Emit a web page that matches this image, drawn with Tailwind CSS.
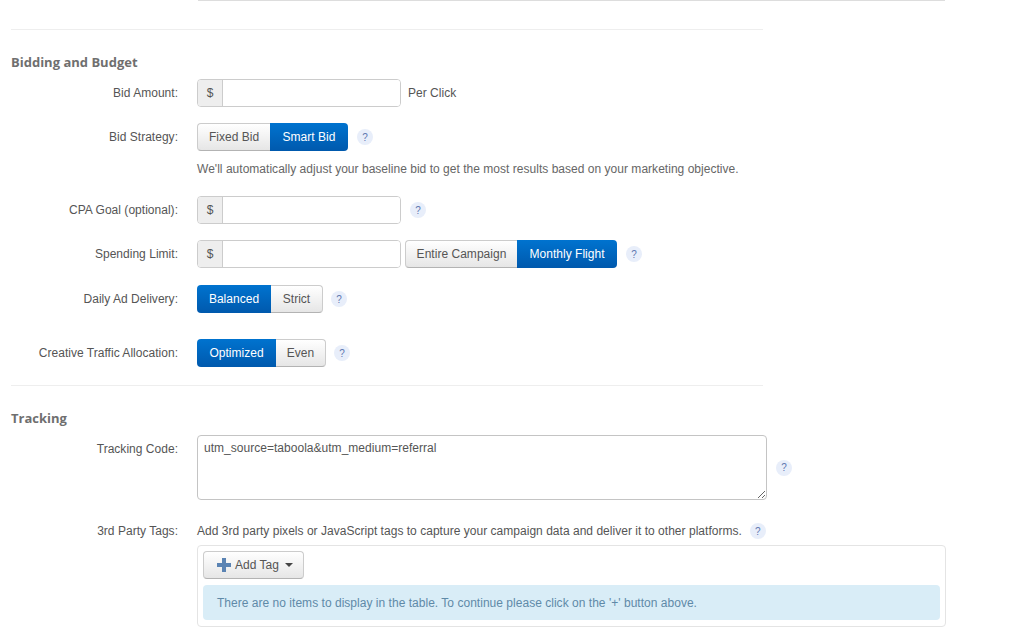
<!DOCTYPE html>
<html lang="en">
<head>
    <meta charset="UTF-8">
    <title>Bidding and Budget</title>
    <script src="https://cdn.jsdelivr.net/npm/@tailwindcss/browser@4"></script>
</head>
<body class="bg-white font-['Liberation_Sans',Arial,sans-serif] text-[12px] tracking-[0.025px] text-[#555]">
<div class="w-[1024px] h-[642px] overflow-hidden pl-[11px]">
    <!-- end of previous section -->
    <div class="ml-[187px] w-[747px] h-px bg-[#ddd]"></div>
    <div class="mt-[28px] w-[752px] h-px bg-[#eee]"></div>

    <!-- Bidding and Budget -->
    <h2 class="mt-[22px] h-[20px] leading-[20px] font-['Open_Sans',sans-serif] font-bold text-[13px] tracking-normal text-[#6f6f6f]">Bidding and Budget</h2>

    <div class="mt-[7px] flex items-center h-[28px]">
        <label class="w-[167px] text-right">Bid Amount:</label>
        <div class="ml-[19px] flex h-[28px] w-[204px] border border-[#ccc] rounded-[4px] overflow-hidden">
            <span class="w-[25px] bg-[#eee] border-r border-[#ccc] flex items-center justify-center">$</span>
            <input type="text" class="flex-1 min-w-0 bg-white">
        </div>
        <span class="ml-[7px]">Per Click</span>
    </div>

    <div class="mt-[16px] flex items-center h-[28px]">
        <label class="w-[167px] text-right">Bid Strategy:</label>
        <div class="ml-[19px] flex h-[28px]">
            <button class="w-[73px] border border-r-0 border-[#ccc] border-b-[#b3b3b3] rounded-l-[4px] bg-gradient-to-b from-white to-[#e6e6e6] text-[#555]">Fixed Bid</button>
            <button class="w-[78px] rounded-r-[4px] bg-gradient-to-b from-[#0073cf] to-[#0059ad] text-white">Smart Bid</button>
        </div>
        <span class="ml-[9px] w-[16px] h-[16px] rounded-full bg-[#e8eefa] text-[#5f78b0] text-[10px] flex items-center justify-center">?</span>
    </div>

    <p class="mt-[10px] ml-[186px] h-[16px] leading-[16px] text-[#666]">We'll automatically adjust your baseline bid to get the most results based on your marketing objective.</p>

    <div class="mt-[19px] flex items-center h-[28px]">
        <label class="w-[167px] text-right">CPA Goal (optional):</label>
        <div class="ml-[19px] flex h-[28px] w-[204px] border border-[#ccc] rounded-[4px] overflow-hidden">
            <span class="w-[25px] bg-[#eee] border-r border-[#ccc] flex items-center justify-center">$</span>
            <input type="text" class="flex-1 min-w-0 bg-white">
        </div>
        <span class="ml-[9px] w-[16px] h-[16px] rounded-full bg-[#e8eefa] text-[#5f78b0] text-[10px] flex items-center justify-center">?</span>
    </div>

    <div class="mt-[16px] flex items-center h-[28px]">
        <label class="w-[167px] text-right">Spending Limit:</label>
        <div class="ml-[19px] flex h-[28px] w-[204px] border border-[#ccc] rounded-[4px] overflow-hidden">
            <span class="w-[25px] bg-[#eee] border-r border-[#ccc] flex items-center justify-center">$</span>
            <input type="text" class="flex-1 min-w-0 bg-white">
        </div>
        <div class="ml-[4px] flex h-[28px]">
            <button class="w-[112px] border border-r-0 border-[#ccc] border-b-[#b3b3b3] rounded-l-[4px] bg-gradient-to-b from-white to-[#e6e6e6] text-[#555]">Entire Campaign</button>
            <button class="w-[100px] rounded-r-[4px] bg-gradient-to-b from-[#0073cf] to-[#0059ad] text-white">Monthly Flight</button>
        </div>
        <span class="ml-[9px] w-[16px] h-[16px] rounded-full bg-[#e8eefa] text-[#5f78b0] text-[10px] flex items-center justify-center">?</span>
    </div>

    <div class="mt-[17px] flex items-center h-[28px]">
        <label class="w-[167px] text-right">Daily Ad Delivery:</label>
        <div class="ml-[19px] flex h-[28px]">
            <button class="w-[74px] rounded-l-[4px] bg-gradient-to-b from-[#0073cf] to-[#0059ad] text-white">Balanced</button>
            <button class="w-[52px] border border-l-0 border-[#ccc] border-b-[#b3b3b3] rounded-r-[4px] bg-gradient-to-b from-white to-[#e6e6e6] text-[#555]">Strict</button>
        </div>
        <span class="ml-[8px] w-[16px] h-[16px] rounded-full bg-[#e8eefa] text-[#5f78b0] text-[10px] flex items-center justify-center">?</span>
    </div>

    <div class="mt-[26px] flex items-center h-[28px]">
        <label class="w-[167px] text-right">Creative Traffic Allocation:</label>
        <div class="ml-[19px] flex h-[28px]">
            <button class="w-[79px] rounded-l-[4px] bg-gradient-to-b from-[#0073cf] to-[#0059ad] text-white">Optimized</button>
            <button class="w-[50px] border border-l-0 border-[#ccc] border-b-[#b3b3b3] rounded-r-[4px] bg-gradient-to-b from-white to-[#e6e6e6] text-[#555]">Even</button>
        </div>
        <span class="ml-[8px] w-[16px] h-[16px] rounded-full bg-[#e8eefa] text-[#5f78b0] text-[10px] flex items-center justify-center">?</span>
    </div>

    <div class="mt-[18px] w-[752px] h-px bg-[#eee]"></div>

    <!-- Tracking -->
    <h2 class="mt-[22px] h-[20px] leading-[20px] font-['Open_Sans',sans-serif] font-bold text-[13px] tracking-normal text-[#6f6f6f]">Tracking</h2>

    <div class="mt-[7px] flex items-center h-[65px]">
        <label class="w-[167px] text-right self-start mt-[5px]">Tracking Code:</label>
        <textarea class="ml-[19px] w-[570px] h-[65px] border border-[#c4c4c4] rounded-[4px] px-[6px] py-[4px] leading-[16px] text-[#555]">utm_source=taboola&amp;utm_medium=referral</textarea>
        <span class="ml-[9px] w-[16px] h-[16px] rounded-full bg-[#e8eefa] text-[#5f78b0] text-[10px] flex items-center justify-center">?</span>
    </div>

    <div class="mt-[21px] flex items-center h-[20px]">
        <label class="w-[167px] text-right">3rd Party Tags:</label>
        <span class="ml-[19px]">Add 3rd party pixels or JavaScript tags to capture your campaign data and deliver it to other platforms.</span>
        <span class="ml-[8px] w-[16px] h-[16px] rounded-full bg-[#e8eefa] text-[#5f78b0] text-[10px] flex items-center justify-center">?</span>
    </div>

    <div class="mt-[4px] ml-[186px] w-[749px] h-[82px] border border-[#e4e4e4] rounded-[4px] px-[5px] pt-[5px]">
        <button class="flex items-center h-[28px] w-[101px] pl-[13px] border border-[#ccc] border-b-[#b3b3b3] rounded-[4px] bg-gradient-to-b from-white to-[#e6e6e6] text-[#555]">
            <svg class="w-[14px] h-[14px]" viewBox="0 0 14 14"><path d="M5 0h4v5h5v4H9v5H5V9H0V5h5z" fill="#5a83b3"/></svg>
            <span class="ml-[4px]">Add Tag</span>
            <span class="ml-[6px] w-0 h-0 border-x-[4px] border-x-transparent border-t-[4px] border-t-[#444]"></span>
        </button>
        <div class="mt-[6px] h-[35px] flex items-center pl-[14px] rounded-[4px] bg-[#d9edf7] text-[#5f8aa8]">There are no items to display in the table. To continue please click on the '+' button above.</div>
    </div>
</div>
</body>
</html>
